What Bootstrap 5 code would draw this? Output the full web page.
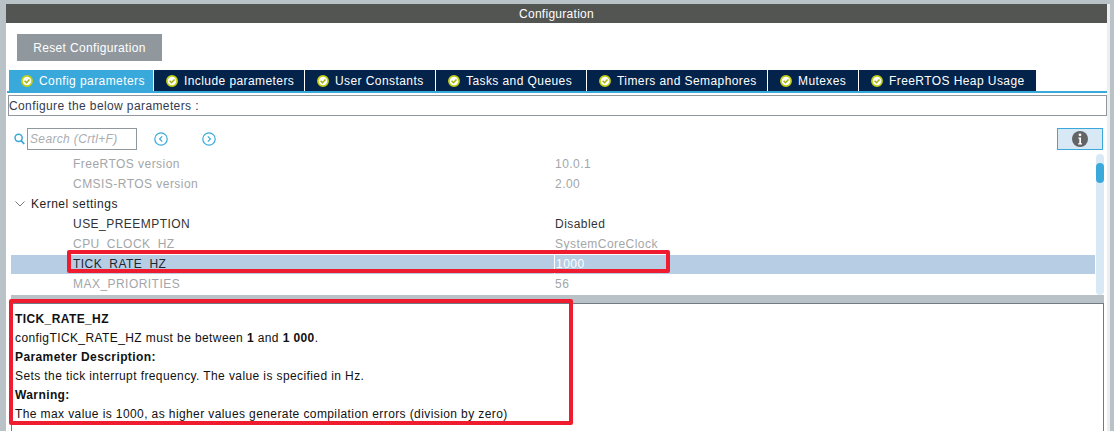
<!DOCTYPE html>
<html lang="en">
<head>
<meta charset="utf-8">
<title>Configuration</title>
<link rel="stylesheet" href="https://cdn.jsdelivr.net/npm/bootstrap@5.3.0/dist/css/bootstrap.min.css">
<style>
html,body{height:431px;overflow:hidden}
body{background:#b8c2c7;font-family:"Liberation Sans",Arial,sans-serif;font-size:12px;line-height:1.2;padding:4px 4px 0 6px;color:#000}
.cfg-panel{background:#fff;height:427px;position:relative;border-right:3px solid #eeeeee;overflow:hidden}
.cfg-title{background:#535553;color:#fff;height:19px;line-height:20px;text-align:center;margin-right:-3px;padding-right:3px;letter-spacing:.28px}
.cfg-reset{background:#90989e;color:#fff;border:0;border-radius:0;width:145px;height:27px;margin:11px 0 9px 11px;padding:0;font-size:12px;letter-spacing:.34px;display:block}
.cfg-tabs{margin-left:3px;height:21px;flex-wrap:nowrap}
.cfg-tab{background:#03234b;color:#fff;height:21px;display:flex;align-items:center;padding:0 0 0 12px;gap:6px;border-right:1px solid #fff;letter-spacing:.42px;white-space:nowrap;line-height:22px}
.cfg-tab.on{background:#39a9dc}
.cfg-tab svg{flex:none}
.cfg-tab:last-child{border-right:0}
.cfg-tab:nth-child(1){width:145px}
.cfg-tab:nth-child(2){width:151px}
.cfg-tab:nth-child(3){width:131px}
.cfg-tab:nth-child(4){width:151px}
.cfg-tab:nth-child(5){width:181px}
.cfg-tab:nth-child(6){width:91px}
.cfg-tab:nth-child(7){width:177px}
.cfg-bar{background:#39a9dc;height:2px;margin:0 -2px 0 1px}
.cfg-note{border:1px solid #90989e;height:21px;margin:2px 0 0 2px;margin-right:1px;line-height:20px;padding-left:0;letter-spacing:.39px;color:#333a4f;width:1099px}
.cfg-tools{height:22px;margin-top:12px;padding-left:8px}
.cfg-search{border:1px solid #90989e;width:110px;height:22px;margin-left:2px;line-height:20px;padding-left:2px;color:#a9adb2;font-style:italic;letter-spacing:.35px}
.cfg-info{width:46px;height:22px;border:1px solid #39a9dc;background:#d9e8f5;margin-left:auto;margin-right:4px;padding:0;border-radius:0}
.cfg-arrow{margin-left:17px}
.cfg-arrow+.cfg-arrow{margin-left:34px}
.cfg-tree{height:141px;margin:4px 0 0 5px;margin-right:3px}
.cfg-list{width:1084px}
.cfg-row{height:20px;line-height:20px}
.cfg-name{width:544px;padding-left:62px;color:#a3a6a9;letter-spacing:.46px;flex:none}
.cfg-val{color:#a3a6a9;letter-spacing:.46px}
.cfg-row.act .cfg-name,.cfg-row.act .cfg-val{color:#333}
.cfg-row.sel{background:#b6cde4;height:19px;line-height:19px;margin-top:1px}
.cfg-row.sel .cfg-name{color:#1d2733}
.cfg-row.sel .cfg-val{color:#fff;border-left:1px solid #fff;margin-left:-1px;padding-left:1px}
.cfg-group{padding-left:4px;color:#222;letter-spacing:.5px;gap:6px;height:20px;line-height:20px}
.cfg-track{width:8px;background:#d9e8f5;border-radius:4px;margin-left:1px;position:relative;flex:none}
.cfg-thumb{position:absolute;left:0;top:9px;width:8px;height:20px;border-radius:4px;background:#39a9dc}
.cfg-band{background:#b8c2c7;height:8px;margin:0 3px 0 5px}
.cfg-desc{border-left:1px solid #6f7a82;border-top:1px solid #6f7a82;border-right:1px solid #6f7a82;margin:0 3px 0 5px;height:130px;padding:6px 0 0 3px;line-height:19px;color:#111;letter-spacing:.4px}
.cfg-desc div{white-space:nowrap}
.cfg-mark{position:absolute;border:4px solid #ee1c2e;border-radius:2px;pointer-events:none}
.cfg-m1{left:61px;top:246px;width:603px;height:23px}
.cfg-m2{left:3px;top:295px;width:564px;height:126px}
</style>
</head>
<body>
<div class="cfg-panel">
  <div class="cfg-title">Configuration</div>
  <button type="button" class="btn cfg-reset">Reset Configuration</button>
  <ul class="nav cfg-tabs">
    <li class="cfg-tab on"><svg width="12" height="12" viewBox="0 0 12 12"><circle cx="6" cy="6" r="5.1" fill="#fff" stroke="#c2d010" stroke-width="1.7"/><path d="M3.6 5.8l1.9 1.9 3-3.2" fill="none" stroke="#a4b400" stroke-width="1.5"/></svg>Config parameters</li>
    <li class="cfg-tab"><svg width="12" height="12" viewBox="0 0 12 12"><circle cx="6" cy="6" r="5.1" fill="#fff" stroke="#c2d010" stroke-width="1.7"/><path d="M3.6 5.8l1.9 1.9 3-3.2" fill="none" stroke="#a4b400" stroke-width="1.5"/></svg>Include parameters</li>
    <li class="cfg-tab"><svg width="12" height="12" viewBox="0 0 12 12"><circle cx="6" cy="6" r="5.1" fill="#fff" stroke="#c2d010" stroke-width="1.7"/><path d="M3.6 5.8l1.9 1.9 3-3.2" fill="none" stroke="#a4b400" stroke-width="1.5"/></svg>User Constants</li>
    <li class="cfg-tab"><svg width="12" height="12" viewBox="0 0 12 12"><circle cx="6" cy="6" r="5.1" fill="#fff" stroke="#c2d010" stroke-width="1.7"/><path d="M3.6 5.8l1.9 1.9 3-3.2" fill="none" stroke="#a4b400" stroke-width="1.5"/></svg>Tasks and Queues</li>
    <li class="cfg-tab"><svg width="12" height="12" viewBox="0 0 12 12"><circle cx="6" cy="6" r="5.1" fill="#fff" stroke="#c2d010" stroke-width="1.7"/><path d="M3.6 5.8l1.9 1.9 3-3.2" fill="none" stroke="#a4b400" stroke-width="1.5"/></svg>Timers and Semaphores</li>
    <li class="cfg-tab"><svg width="12" height="12" viewBox="0 0 12 12"><circle cx="6" cy="6" r="5.1" fill="#fff" stroke="#c2d010" stroke-width="1.7"/><path d="M3.6 5.8l1.9 1.9 3-3.2" fill="none" stroke="#a4b400" stroke-width="1.5"/></svg>Mutexes</li>
    <li class="cfg-tab"><svg width="12" height="12" viewBox="0 0 12 12"><circle cx="6" cy="6" r="5.1" fill="#fff" stroke="#c2d010" stroke-width="1.7"/><path d="M3.6 5.8l1.9 1.9 3-3.2" fill="none" stroke="#a4b400" stroke-width="1.5"/></svg>FreeRTOS Heap Usage</li>
  </ul>
  <div class="cfg-bar"></div>
  <div class="cfg-note">Configure the below parameters :</div>
  <div class="cfg-tools d-flex align-items-center">
    <svg width="11" height="12" viewBox="0 0 11 12"><circle cx="4.6" cy="4.8" r="3.6" fill="none" stroke="#39a9dc" stroke-width="1.5"/><path d="M7.2 7.6l3 3.4" stroke="#39a9dc" stroke-width="1.8"/></svg>
    <div class="cfg-search">Search (Crtl+F)</div>
    <svg class="cfg-arrow" width="14" height="14" viewBox="0 0 14 14"><circle cx="7" cy="7" r="6.2" fill="none" stroke="#39a9dc" stroke-width="1.2"/><path d="M8.2 4.4L5.6 7l2.6 2.6" fill="none" stroke="#39a9dc" stroke-width="1.2"/></svg>
    <svg class="cfg-arrow" width="14" height="14" viewBox="0 0 14 14"><circle cx="7" cy="7" r="6.2" fill="none" stroke="#39a9dc" stroke-width="1.2"/><path d="M5.8 4.4L8.4 7 5.8 9.6" fill="none" stroke="#39a9dc" stroke-width="1.2"/></svg>
    <button type="button" class="btn cfg-info d-flex align-items-center justify-content-center"><svg width="16" height="16" viewBox="0 0 16 16"><circle cx="8" cy="8" r="8" fill="#636466"/><circle cx="8" cy="3.8" r="1.4" fill="#fff"/><path d="M6.4 6.6h2.6v5.6h1v1.2H6.2v-1.2h1.1V7.8H6.4z" fill="#fff"/></svg></button>
  </div>
  <div class="cfg-tree d-flex">
    <div class="cfg-list">
      <div class="cfg-row d-flex"><span class="cfg-name">FreeRTOS version</span><span class="cfg-val">10.0.1</span></div>
      <div class="cfg-row d-flex"><span class="cfg-name">CMSIS-RTOS version</span><span class="cfg-val">2.00</span></div>
      <div class="cfg-group d-flex align-items-center"><svg width="10" height="6" viewBox="0 0 10 6"><path d="M.5.5L5 5 9.5.5" fill="none" stroke="#777" stroke-width="1"/></svg><span>Kernel settings</span></div>
      <div class="cfg-row act d-flex"><span class="cfg-name">USE_PREEMPTION</span><span class="cfg-val">Disabled</span></div>
      <div class="cfg-row d-flex"><span class="cfg-name">CPU_CLOCK_HZ</span><span class="cfg-val">SystemCoreClock</span></div>
      <div class="cfg-row sel d-flex"><span class="cfg-name">TICK_RATE_HZ</span><span class="cfg-val">1000</span></div>
      <div class="cfg-row d-flex"><span class="cfg-name">MAX_PRIORITIES</span><span class="cfg-val">56</span></div>
    </div>
    <div class="cfg-track"><div class="cfg-thumb"></div></div>
  </div>
  <div class="cfg-band"></div>
  <div class="cfg-desc">
    <div><b>TICK_RATE_HZ</b></div>
    <div>configTICK_RATE_HZ must be between <b>1</b> and <b>1 000</b>.</div>
    <div><b>Parameter Description:</b></div>
    <div>Sets the tick interrupt frequency. The value is specified in Hz.</div>
    <div><b>Warning:</b></div>
    <div>The max value is 1000, as higher values generate compilation errors (division by zero)</div>
  </div>
  <div class="cfg-mark cfg-m1"></div>
  <div class="cfg-mark cfg-m2"></div>
</div>
<script src="https://cdn.jsdelivr.net/npm/bootstrap@5.3.0/dist/js/bootstrap.bundle.min.js"></script>
</body>
</html>
